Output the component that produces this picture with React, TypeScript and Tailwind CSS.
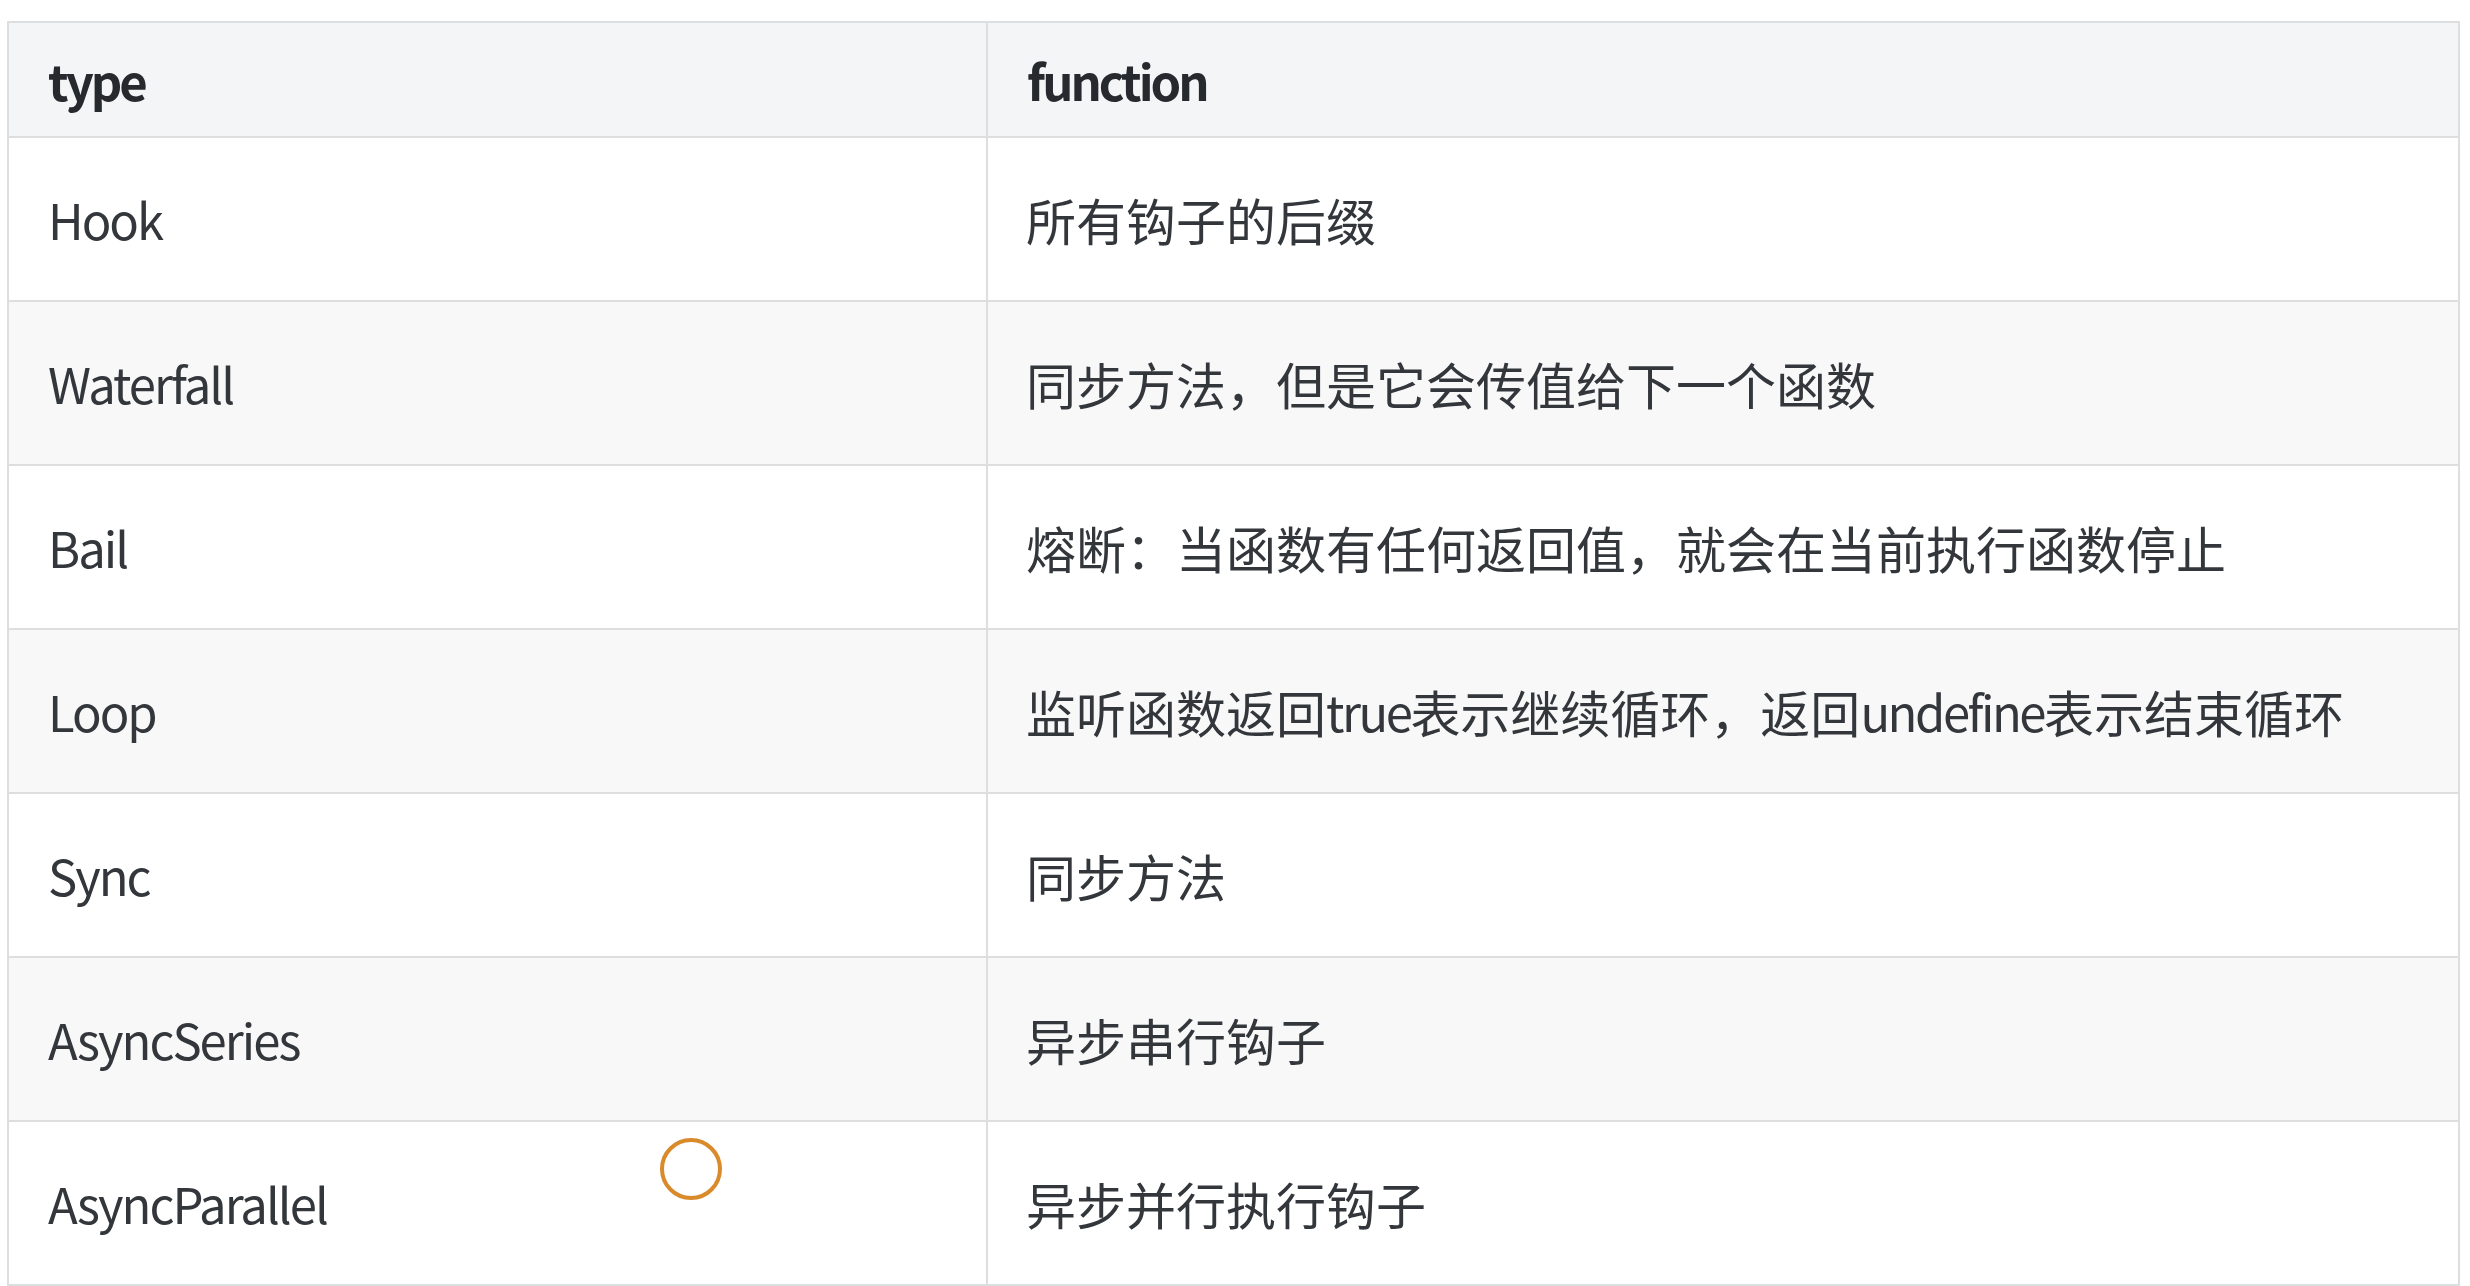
import React from "react";

const rows: [string, React.ReactNode][] = [
  ["Hook", "所有钩子的后缀"],
  ["Waterfall", "同步方法，但是它会传值给下一个函数"],
  ["Bail", "熔断：当函数有任何返回值，就会在当前执行函数停止"],
  [
    "Loop",
    <>
      监听函数返回<span className="text-[49px] tracking-[-2.5px]">true</span>表示继续循环，返回
      <span className="text-[49px] tracking-[-2.5px]">undefine</span>表示结束循环
    </>,
  ],
  ["Sync", "同步方法"],
  ["AsyncSeries", "异步串行钩子"],
  ["AsyncParallel", "异步并行执行钩子"],
];

export default function App() {
  return (
    <div
      className="relative w-[2470px] h-[1286px] overflow-hidden bg-white"
      style={{ fontFamily: '"Noto Sans CJK SC", "Noto Sans", sans-serif' }}
    >
      <div className="ml-[7px] mt-[21px] w-[2453px] border-t-2 border-x-2 border-[#dcdee0]">
        <div className="grid grid-cols-[979px_1fr] h-[115px] border-b-2 border-[#dcdee0] bg-[#f3f5f6] text-[#262a2f] font-bold text-[49px] tracking-[-3px]">
          <div className="flex items-center pl-[39px] border-r-2 border-[#dcdee0]">type</div>
          <div className="flex items-center pl-[39px]">function</div>
        </div>
        {rows.map(([t, f], i) => (
          <div
            key={t}
            className={
              "grid grid-cols-[979px_1fr] h-[164px] border-b-2 border-[#dcdee0] text-[#33373b] " +
              (i % 2 === 1 ? "bg-[#f8f8f9]" : "bg-white")
            }
          >
            <div className="flex items-center pl-[39px] border-r-2 border-[#dcdee0] text-[49px] tracking-[-2px]">
              {t}
            </div>
            <div className="flex items-center pl-[38px] whitespace-nowrap text-[50px]">{f}</div>
          </div>
        ))}
      </div>
      <div className="absolute left-[660px] top-[1138px] w-[62px] h-[62px] rounded-full border-[4px] border-[#d98a2b]" />
    </div>
  );
}
